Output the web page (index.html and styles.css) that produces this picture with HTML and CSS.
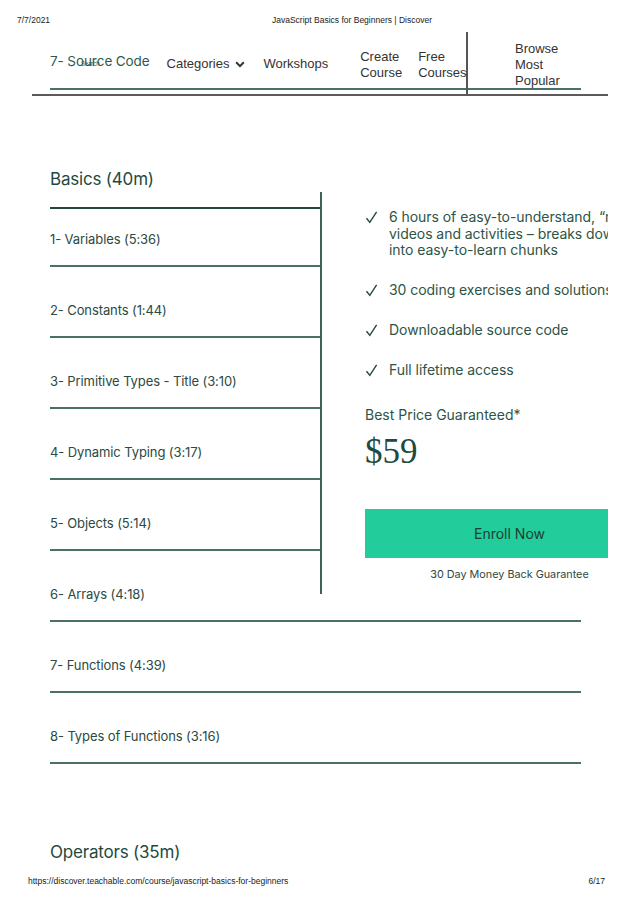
FILE: index.html
```html
<!DOCTYPE html>
<html lang="en">
<head>
<meta charset="utf-8">
<title>JavaScript Basics for Beginners | Discover</title>
<link rel="stylesheet" href="styles.css">
</head>
<body>
<header class="print-head">
  <span class="print-date">7/7/2021</span>
  <span class="print-title">JavaScript Basics for Beginners | Discover</span>
</header>

<div class="page">
  <nav class="nav">
    <div class="nav-main">
      <span class="nav-source">7- So<span class="overstrike">ur<span class="ghost">Search</span></span>ce Code</span>
      <span class="nav-item nav-cat">Categories
        <svg class="chev" width="10" height="7" viewBox="0 0 10 7"><path d="M1.2 1.3 L5 5.1 L8.8 1.3" fill="none" stroke="#333" stroke-width="2"/></svg>
      </span>
      <span class="nav-item nav-work">Workshops</span>
      <span class="nav-item nav-two nav-create">Create<br>Course</span>
      <span class="nav-item nav-two nav-free">Free<br>Courses</span>
    </div>
    <div class="nav-side">
      <div class="nav-side-inner">
        <span class="nav-item nav-three">Browse<br>Most<br>Popular</span>
      </div>
    </div>
  </nav>

  <main class="content">
    <h2 class="section-title">Basics (40m)</h2>

    <div class="curriculum">
      <div class="lesson lesson-first">1- Variables (5:36)</div>
      <div class="lesson">2- Constants (1:44)</div>
      <div class="lesson">3- Primitive Types - Title (3:10)</div>
      <div class="lesson">4- Dynamic Typing (3:17)</div>
      <div class="lesson">5- Objects (5:14)</div>
      <div class="lesson lesson-wide lesson-6">6- Arrays (4:18)</div>
      <div class="lesson lesson-wide">7- Functions (4:39)</div>
      <div class="lesson lesson-wide">8- Types of Functions (3:16)</div>

      <aside class="panel">
        <ul class="perks">
          <li class="perk"><svg class="tick" width="13" height="13" viewBox="0 0 13 13"><path d="M1.5 7.2 L4.8 11.4 L11.6 0.8" fill="none" stroke="#24473d" stroke-width="1.4"/></svg><span>6 hours of easy-to-understand, “no fluff” videos and activities – breaks down<br>into easy-to-learn chunks</span></li>
          <li class="perk"><svg class="tick" width="13" height="13" viewBox="0 0 13 13"><path d="M1.5 7.2 L4.8 11.4 L11.6 0.8" fill="none" stroke="#24473d" stroke-width="1.4"/></svg><span>30 coding exercises and solutions</span></li>
          <li class="perk"><svg class="tick" width="13" height="13" viewBox="0 0 13 13"><path d="M1.5 7.2 L4.8 11.4 L11.6 0.8" fill="none" stroke="#24473d" stroke-width="1.4"/></svg><span>Downloadable source code</span></li>
          <li class="perk"><svg class="tick" width="13" height="13" viewBox="0 0 13 13"><path d="M1.5 7.2 L4.8 11.4 L11.6 0.8" fill="none" stroke="#24473d" stroke-width="1.4"/></svg><span>Full lifetime access</span></li>
        </ul>
        <p class="best">Best Price Guaranteed*</p>
        <p class="price">$59</p>
        <div class="enroll">Enroll Now</div>
        <p class="money-back">30 Day Money Back Guarantee</p>
      </aside>
    </div>

    <h2 class="section-title section-next">Operators (35m)</h2>
  </main>
</div>

<footer class="print-foot">
  <span>https://discover.teachable.com/course/javascript-basics-for-beginners</span>
  <span>6/17</span>
</footer>
</body>
</html>
```

FILE: styles.css
```css
* { box-sizing: border-box; }
html, body { margin: 0; padding: 0; background: #fff; }
body {
  position: relative;
  width: 638px;
  height: 903px;
  overflow: hidden;
  font-family: "Inter", "Noto Sans", sans-serif;
  color: #2b4a42;
}

.print-head {
  height: 32px;
  display: grid;
  grid-template-columns: 1fr auto 1fr;
  align-items: start;
  padding: 15px 17px 0;
  font-family: "Liberation Sans", Arial, sans-serif;
  font-size: 8.5px;
  color: #222;
}
.print-title { transform: translateX(33px); }

.page {
  margin: 0 30px 0 32px;
  overflow: hidden;
}

/* nav */
.nav {
  display: flex;
  height: 64px;
  border-bottom: 2px solid #5a5a5a;
  padding-left: 18px;
}
.nav-main {
  display: flex;
  align-items: center;
  width: 416px;
  height: 58px;
  border-bottom: 2px solid #4a7168;
}
.nav-side {
  border-left: 2px solid #555;
  height: 62px;
}
.nav-side-inner {
  width: 113px;
  height: 58px;
  border-bottom: 2px solid #4a7168;
  padding-left: 47px;
  display: flex;
  align-items: center;
}
.nav-item {
  font-family: "Liberation Sans", Arial, sans-serif;
  font-size: 13px;
  color: #333;
  line-height: 16px;
  padding-top: 6px;
  white-space: nowrap;
}
.nav-source {
  position: relative;
  font-size: 13.5px;
  color: #2d5a4f;
  padding-top: 2px;
  letter-spacing: -0.1px;
  white-space: nowrap;
}
.overstrike { position: relative; }
.ghost {
  position: absolute;
  left: -3px;
  top: 7px;
  font-size: 6px;
  color: #2d5a4f;
  letter-spacing: -0.2px;
}
.nav-cat { margin-left: 17px; display: flex; align-items: center; gap: 6px; padding-top: 8px; }
.chev { margin-top: 1px; }
.nav-work { margin-left: 18px; padding-top: 8px; }
.nav-create { margin-left: 32px; }
.nav-free { margin-left: 16px; }
.nav-two { padding-top: 10px; }
.nav-three { padding-top: 10px; }

/* content */
.content {
  padding: 0 27px 0 18px;
}
.section-title {
  margin: 0;
  font-weight: 400;
  font-size: 17px;
  line-height: 22px;
  color: #1f4a3f;
  letter-spacing: -0.2px;
}
.content > .section-title:first-child { padding-top: 72px; }

.curriculum {
  display: grid;
  grid-template-columns: 270px minmax(0, 1fr);
  margin-top: 2px;
}
.lesson {
  grid-column: 1;
  font-size: 13px;
  line-height: 16px;
  color: #2b4a42;
  padding: 35px 0 18px;
  border-bottom: 2px solid #4a7168;
  letter-spacing: -0.1px;
}
.lesson-first {
  margin-top: 15px;
  border-top: 2px solid #24473d;
  padding-top: 22px;
}
.lesson-wide { grid-column: 1 / -1; }
.lesson-6 { grid-row: 6; }

.panel {
  grid-column: 2;
  grid-row: 1 / 7;
  align-self: start;
  height: 402px;
  border-left: 2px solid #3d6358;
  padding: 17px 0 0 43px;
  position: relative;
  z-index: 1;
}
.perks {
  list-style: none;
  margin: 0;
  padding: 0;
  width: 320px;
  display: flex;
  flex-direction: column;
  gap: 23.5px;
}
.perk {
  display: flex;
  gap: 11px;
  font-size: 14px;
  line-height: 16.5px;
  color: #2d5447;
  letter-spacing: -0.05px;
}
.tick { flex: none; margin-top: 2px; }
.best {
  margin: 27px 0 0;
  font-size: 14px;
  line-height: 18px;
  color: #2d5447;
}
.price {
  margin: 8px 0 0;
  font-family: "Liberation Serif", "Times New Roman", serif;
  font-size: 35px;
  line-height: 40px;
  color: #1f4a3f;
}
.enroll {
  margin-top: 37px;
  width: 289px;
  height: 49px;
  background: #22cc9b;
  color: #1d3f36;
  display: flex;
  align-items: center;
  justify-content: center;
  font-size: 14px;
}
.money-back {
  width: 289px;
  margin: 10px 0 0;
  text-align: center;
  font-size: 10.8px;
  color: #2b4a42;
}

.section-next { margin-top: 77px; }

.print-foot {
  position: absolute;
  left: 0;
  right: 0;
  top: 876px;
  display: flex;
  justify-content: space-between;
  padding: 0 33px 0 28px;
  font-family: "Liberation Sans", Arial, sans-serif;
  font-size: 8.5px;
  color: #222;
}
```
